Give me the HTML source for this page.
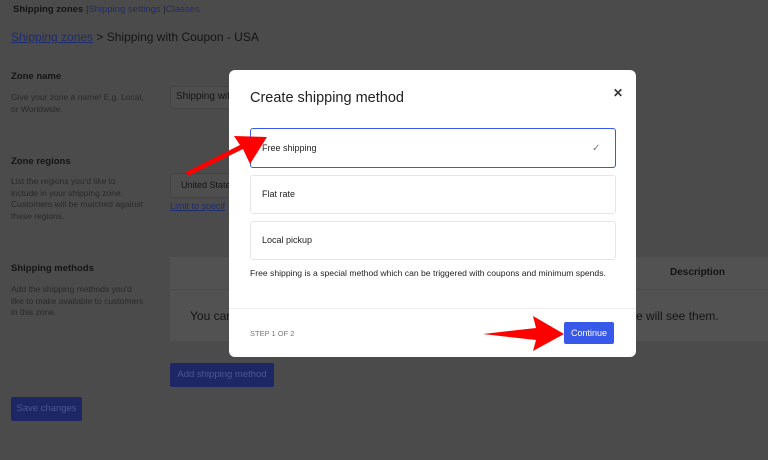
<!DOCTYPE html><html><head><style>
body{margin:0;width:768px;height:460px;background:#4b4b4b;font-family:"Liberation Sans",sans-serif;position:relative;overflow:hidden;color:#1e1e1e}
.a{position:absolute;white-space:nowrap}
.bk{color:#151515}.g{color:#2a2a2a}
</style></head><body>
<div class="a bk" style="left:13px;top:4px;font-size:9.5px;font-weight:bold">Shipping zones <span style="font-weight:normal;color:#222">|</span><span style="font-weight:normal;color:#1f2d6b">Shipping settings</span> <span style="font-weight:normal;color:#222">|</span><span style="font-weight:normal;color:#1f2d6b">Classes</span></div>
<div class="a bk" style="left:11px;top:30px;font-size:12px"><span style="color:#1f2d6b;text-decoration:underline">Shipping zones</span> &gt; Shipping with Coupon - USA</div>
<div class="a bk" style="left:11px;top:71px;font-size:9.5px;font-weight:bold">Zone name</div>
<div class="a g" style="left:11px;top:92px;font-size:8.5px;line-height:11.5px">Give your zone a name! E.g. Local,<br>or Worldwide.</div>
<div class="a" style="left:170px;top:86px;width:70px;height:21px;background:#4e4e4e;border:1px solid #444;border-radius:3px"></div>
<div class="a bk" style="left:176px;top:91px;font-size:10px">Shipping wit</div>
<div class="a bk" style="left:11px;top:156px;font-size:9.5px;font-weight:bold">Zone regions</div>
<div class="a g" style="left:11px;top:176px;font-size:8.5px;line-height:11.5px">List the regions you'd like to<br>include in your shipping zone.<br>Customers will be matched against<br>these regions.</div>
<div class="a" style="left:170px;top:173px;width:70px;height:23px;background:#4e4e4e;border:1px solid #444;border-radius:3px"></div>
<div class="a bk" style="left:181px;top:180px;font-size:9px">United State</div>
<div class="a" style="left:170px;top:201px;font-size:9px;color:#1f2d6b;text-decoration:underline">Limit to specif</div>
<div class="a bk" style="left:11px;top:263px;font-size:9.5px;font-weight:bold">Shipping methods</div>
<div class="a g" style="left:11px;top:284px;font-size:8.5px;line-height:11.5px">Add the shipping methods you'd<br>like to make available to customers<br>in this zone.</div>
<div class="a" style="left:170px;top:257px;width:598px;height:84px;background:#525252"></div>
<div class="a" style="left:170px;top:289px;width:598px;height:1px;background:#4a4a4a"></div>
<div class="a bk" style="left:670px;top:267px;font-size:10px;font-weight:bold">Description</div>
<div class="a bk" style="left:190px;top:309px;font-size:12px">You can</div>
<div class="a bk" style="left:636px;top:309px;font-size:12px">e will see them.</div>
<div class="a" style="left:170px;top:363px;width:104px;height:24px;background:#1d2766;border-radius:2px;color:#4b5690;font-size:9.5px;line-height:24px;text-align:center">Add shipping method</div>
<div class="a" style="left:11px;top:397px;width:71px;height:24px;background:#1d2766;border-radius:2px;color:#4b5690;font-size:9.5px;line-height:24px;text-align:center">Save changes</div>

<div class="a" style="left:229px;top:70px;width:407px;height:287px;background:#fff;border-radius:6px"></div>
<div class="a" style="left:250px;top:90px;font-size:14.5px;color:#1e1e1e">Create shipping method</div>
<div class="a" style="left:613px;top:86px;font-size:12px;color:#333;font-weight:bold">✕</div>
<div class="a" style="left:250px;top:128px;width:364px;height:38px;border:1px solid #3858e9;border-radius:3px"></div>
<div class="a" style="left:262px;top:143px;font-size:9px;color:#1e1e1e">Free shipping</div>
<div class="a" style="left:592px;top:143px;font-size:10px;color:#777">✓</div>
<div class="a" style="left:250px;top:175px;width:364px;height:37px;border:1px solid #e6e6e6;border-radius:3px"></div>
<div class="a" style="left:262px;top:189px;font-size:9px;color:#1e1e1e">Flat rate</div>
<div class="a" style="left:250px;top:221px;width:364px;height:37px;border:1px solid #e6e6e6;border-radius:3px"></div>
<div class="a" style="left:262px;top:235px;font-size:9px;color:#1e1e1e">Local pickup</div>
<div class="a" style="left:250px;top:268px;font-size:8.6px;color:#1e1e1e">Free shipping is a special method which can be triggered with coupons and minimum spends.</div>
<div class="a" style="left:229px;top:308px;width:407px;height:1px;background:#eee"></div>
<div class="a" style="left:250px;top:329px;font-size:7.5px;color:#777">STEP 1 OF 2</div>
<div class="a" style="left:564px;top:322px;width:50px;height:22px;background:#3858e9;border-radius:2px;color:#fff;font-size:9px;line-height:22px;text-align:center">Continue</div>

<svg class="a" style="left:0;top:0" width="768" height="460">
<polygon fill="#f00" points="188,176 243,149 250,164 267,137 234,136 240,145 186,172"/>
<polygon fill="#f00" points="483,334 536,328 533,316 564,334 533,351 536,340"/>
</svg>
</body></html>
